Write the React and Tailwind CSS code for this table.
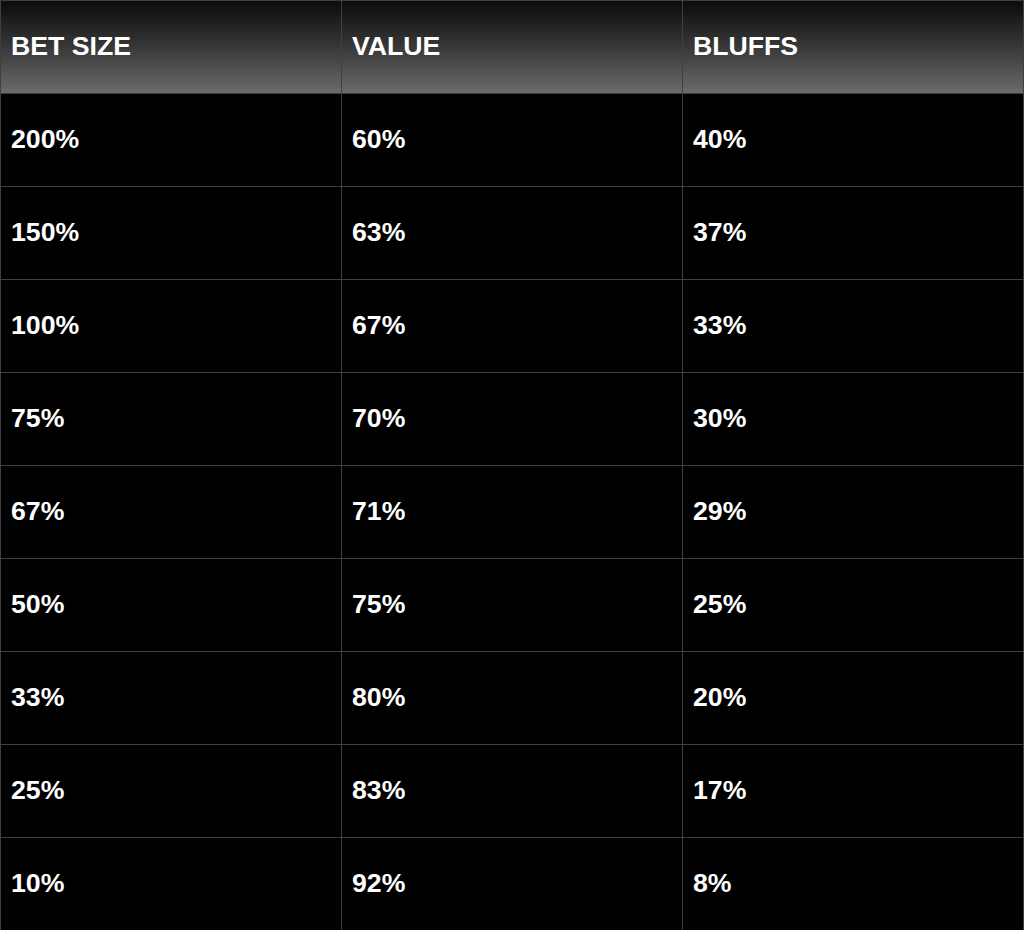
const rows = [
  ["200%", "60%", "40%"],
  ["150%", "63%", "37%"],
  ["100%", "67%", "33%"],
  ["75%", "70%", "30%"],
  ["67%", "71%", "29%"],
  ["50%", "75%", "25%"],
  ["33%", "80%", "20%"],
  ["25%", "83%", "17%"],
  ["10%", "92%", "8%"],
];

const App = () => {
  return (
    <div className="w-[1024px] h-[930px] bg-black font-['Liberation_Sans',Arial,sans-serif]">
      <table className="w-full h-full border-collapse table-fixed">
        <thead>
          <tr className="h-[93px] bg-gradient-to-b from-[#0c0c0c] to-[#6c6c6c]">
            {["BET SIZE", "VALUE", "BLUFFS"].map((h) => (
              <th
                key={h}
                className="border border-[#404040] text-left pl-[10px] pb-[2px] text-white font-bold text-[26.67px]"
              >
                {h}
              </th>
            ))}
          </tr>
        </thead>
        <tbody>
          {rows.map((r, i) => (
            <tr key={i} className="h-[93px]">
              {r.map((c, j) => (
                <td
                  key={j}
                  className="border border-[#404040] pl-[10px] pb-[2px] text-white font-bold text-[26.67px]"
                >
                  {c}
                </td>
              ))}
            </tr>
          ))}
        </tbody>
      </table>
    </div>
  );
};

export default App;
